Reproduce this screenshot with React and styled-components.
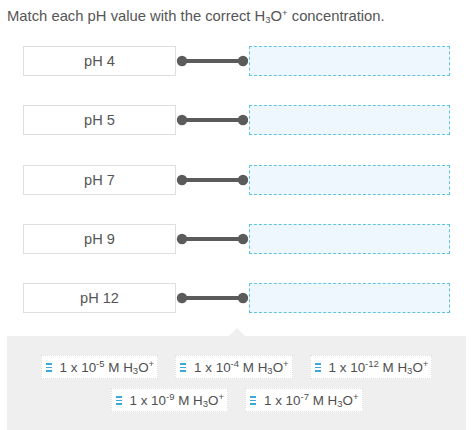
import styled, { createGlobalStyle } from "styled-components";

const GlobalStyle = createGlobalStyle`
  html, body {
    margin: 0;
    padding: 0;
    background: #fff;
  }
  body {
    font-family: "Liberation Sans", Arial, Helvetica, sans-serif;
    color: #555;
  }
`;

const Page = styled.div`
  width: 474px;
  height: 430px;
  overflow: hidden;
  display: flex;
  flex-direction: column;
`;

const Title = styled.div`
  padding: 7px 0 0 7px;
  height: 46px;
  box-sizing: border-box;
  font-size: 14.8px;
  line-height: 18px;
  color: #555;
`;

const Rows = styled.div`
  display: flex;
  flex-direction: column;
  gap: 29.25px;
  padding-left: 23px;
`;

const Row = styled.div`
  display: flex;
  align-items: center;
  height: 30px;
`;

const Label = styled.div`
  width: 153px;
  height: 30px;
  box-sizing: border-box;
  border: 1px solid #dedede;
  background: #fff;
  display: flex;
  align-items: center;
  justify-content: center;
  font-size: 14.6px;
  color: #555;
`;

const Connector = styled.div`
  width: 73px;
  height: 30px;
  display: flex;
  align-items: center;
  justify-content: center;
`;

const DropZone = styled.div`
  width: 201px;
  height: 30px;
  box-sizing: border-box;
  border: 1px dashed #5fc3dc;
  background: #eef7fe;
`;

const Tray = styled.div`
  position: relative;
  margin: 23px 8px 0 7px;
  flex: 1;
  background: #efefef;
  padding: 19px 0 0;
  display: flex;
  flex-wrap: wrap;
  justify-content: center;
  align-content: flex-start;
  column-gap: 17px;
  row-gap: 9px;

  &::before {
    content: "";
    position: absolute;
    top: -8px;
    left: 222px;
    border-left: 8px solid transparent;
    border-right: 8px solid transparent;
    border-bottom: 8px solid #efefef;
  }
`;

const Chip = styled.div`
  height: 24px;
  box-sizing: border-box;
  background: #fff;
  border: 1px dotted #e2dede;
  display: flex;
  align-items: center;
  gap: 8px;
  padding: 0 3px 0 4px;
  font-size: 13.4px;
  color: #4f4f4f;
  white-space: nowrap;
`;

const Grip = styled.span`
  display: inline-flex;
  flex-direction: column;
  gap: 2px;
  width: 6px;
  margin-top: 1px;

  i {
    display: block;
    height: 1.5px;
    background: #3ba8dc;
  }
`;

const Sup = styled.sup`
  font-size: 9.5px;
  vertical-align: 5px;
  line-height: 0;
`;

const Sub = styled.sub`
  font-size: 9.5px;
  vertical-align: -2px;
  line-height: 0;
`;

const Link = () => (
  <svg width="73" height="12" viewBox="0 0 73 12">
    <line x1="6" y1="6" x2="67" y2="6" stroke="#5b5b5b" strokeWidth="4" />
    <circle cx="6" cy="6" r="5.2" fill="#5b5b5b" />
    <circle cx="67" cy="6" r="5.2" fill="#5b5b5b" />
  </svg>
);

const H3O = () => (
  <>
    H<Sub>3</Sub>O<Sup>+</Sup>
  </>
);

const rows = ["pH 4", "pH 5", "pH 7", "pH 9", "pH 12"];
const answers = ["-5", "-4", "-12", "-9", "-7"];

export default function App() {
  return (
    <Page>
      <GlobalStyle />
      <Title>
        Match each pH value with the correct <H3O /> concentration.
      </Title>
      <Rows>
        {rows.map((r) => (
          <Row key={r}>
            <Label>{r}</Label>
            <Connector>
              <Link />
            </Connector>
            <DropZone />
          </Row>
        ))}
      </Rows>
      <Tray>
        {answers.map((a) => (
          <Chip key={a}>
            <Grip>
              <i />
              <i />
              <i />
            </Grip>
            <span>
              1 x 10<Sup>{a}</Sup> M <H3O />
            </span>
          </Chip>
        ))}
      </Tray>
    </Page>
  );
}
